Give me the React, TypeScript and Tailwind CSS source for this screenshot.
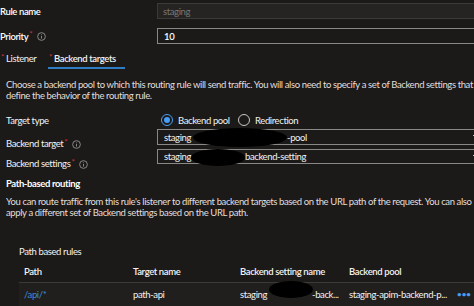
import React from "react";

function Req() {
  return <span className="text-[#d13438] text-[8px] relative -top-[2px] mx-[1px]">*</span>;
}

function Info() {
  return (
    <svg width="9" height="9" viewBox="0 0 10 10" className="inline-block ml-[4px] align-middle">
      <circle cx="5" cy="5" r="4.3" fill="none" stroke="#a19f9d" strokeWidth="0.9" />
      <rect x="4.55" y="4.3" width="0.9" height="3" fill="#a19f9d" />
      <circle cx="5" cy="3.1" r="0.55" fill="#a19f9d" />
    </svg>
  );
}

function Chevron() {
  return (
    <svg width="10" height="6" viewBox="0 0 10 6" className="absolute left-[314px] top-1/2 -translate-y-1/2">
      <path d="M1 1 L5 5 L9 1" fill="none" stroke="#c8c6c4" strokeWidth="1" />
    </svg>
  );
}

export default function App() {
  return (
    <div className="w-[474px] h-[306px] overflow-hidden bg-[#1b1a19] text-[#f3f2f1] text-[9.5px] leading-[11px] tracking-[-0.38px] font-['Lato',sans-serif]">
      {/* Rule name */}
      <div className="flex items-center h-[16px] mt-[3px]">
        <div className="w-[157px] shrink-0 font-semibold text-white">Rule name</div>
        <div className="w-[330px] h-[16px] shrink-0 border border-[#3b3a39] bg-[#252423] text-[#797775] px-[5px] flex items-center">
          staging
        </div>
      </div>
      {/* Priority */}
      <div className="flex items-center h-[16px] mt-[9px]">
        <div className="w-[157px] shrink-0 font-semibold text-white flex items-center">
          Priority<Req />
          <Info />
        </div>
        <div className="w-[330px] h-[16px] shrink-0 border border-[#8a8886] px-[6px] flex items-center font-semibold text-white">
          10
        </div>
      </div>
      {/* Tabs */}
      <div className="flex h-[18px] mt-[7px]">
        <div className="w-[48px] shrink-0 pt-[1.5px]">
          <Req />
          <span className="ml-[1px]">Listener</span>
        </div>
        <div className="w-[77px] shrink-0 pt-[1.5px] border-b-2 border-[#2f7bc4] font-semibold">
          <Req />
          <span className="ml-[1px]">Backend targets</span>
        </div>
      </div>
      {/* Description */}
      <div className="px-[6px] mt-[9.5px] whitespace-nowrap text-[#e1dfdd]">
        <div>
          Choose a backend pool to which this routing rule will send traffic. You will also need to specify a set of Backend settings that
        </div>
        <div>define the behavior of the routing rule.</div>
      </div>
      {/* Target type */}
      <div className="flex items-center h-[12px] mt-[13.5px] pl-[6px]">
        <div className="w-[151px] shrink-0">Target type</div>
        <div className="flex items-center pl-[4px]">
          <span className="w-[12px] h-[12px] shrink-0 rounded-full border-[1.5px] border-[#479ef5] flex items-center justify-center">
            <span className="w-[6px] h-[6px] rounded-full bg-[#479ef5]" />
          </span>
          <span className="ml-[5px] w-[60px] shrink-0">Backend pool</span>
          <span className="w-[12px] h-[12px] shrink-0 rounded-full border border-[#c8c6c4]" />
          <span className="ml-[5px]">Redirection</span>
        </div>
      </div>
      {/* Backend target */}
      <div className="flex h-[16px] mt-[3px] pl-[6px]">
        <div className="w-[151px] shrink-0 pt-[8.5px] whitespace-nowrap">
          Backend target<Req />
          <Info />
        </div>
        <div className="relative w-[330px] h-[16px] shrink-0 border border-[#8a8886] pl-[6px] flex items-center">
          <span>staging</span>
          <span className="absolute left-[35px] top-[-2px] w-[94px] h-[19px] rounded-[50%] bg-black" />
          <span className="absolute left-[129px]">-pool</span>
          <Chevron />
        </div>
      </div>
      {/* Backend settings */}
      <div className="flex h-[15px] mt-[4px] pl-[6px]">
        <div className="w-[151px] shrink-0 pt-[8.5px] whitespace-nowrap">
          Backend settings<Req />
          <Info />
        </div>
        <div className="relative w-[330px] h-[15px] shrink-0 border border-[#8a8886] pl-[6px] flex items-center">
          <span>staging</span>
          <span className="absolute left-[33px] top-[-1px] w-[54px] h-[17px] rounded-[50%] bg-black" />
          <span className="absolute left-[87px]">backend-setting</span>
          <Chevron />
        </div>
      </div>
      {/* Path-based routing */}
      <div className="px-[6px] mt-[13.5px] font-bold text-white">Path-based routing</div>
      <div className="px-[6px] mt-[7px] whitespace-nowrap text-[#e1dfdd]">
        <div>
          You can route traffic from this rule's listener to different backend targets based on the URL path of the request. You can also
        </div>
        <div>apply a different set of Backend settings based on the URL path.</div>
      </div>
      <div className="pl-[19px] mt-[28px]">Path based rules</div>
      {/* Table */}
      <div className="ml-[19px] mt-[4.5px] w-[455px]">
        <div className="grid grid-cols-[109px_107px_109px_108px_12px] h-[22px] items-center border-b border-[#3b3a39] font-semibold pl-[5px]">
          <div>Path</div>
          <div>Target name</div>
          <div>Backend setting name</div>
          <div>Backend pool</div>
          <div />
        </div>
        <div className="grid grid-cols-[109px_107px_109px_108px_12px] h-[24px] items-center bg-[#211f1e] border-b border-[#3b3a39] pl-[5px] whitespace-nowrap">
          <div className="text-[#3a8ad6]">/api/*</div>
          <div>path-api</div>
          <div className="relative">
            <span>staging</span>
            <span className="absolute left-[29px] top-[-8px] w-[44px] h-[17px] rounded-[50%] bg-black" />
            <span className="absolute left-[72px]">-back...</span>
          </div>
          <div>staging-apim-backend-p...</div>
          <div className="text-[#479ef5] font-bold tracking-normal text-[8px]">•••</div>
        </div>
      </div>
    </div>
  );
}
